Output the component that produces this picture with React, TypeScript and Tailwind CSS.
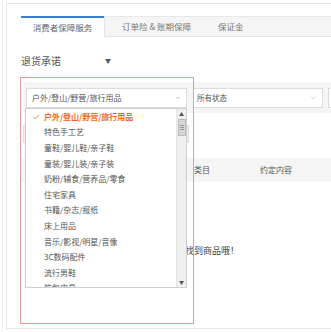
import { ChevronUp, ChevronDown, Check } from 'lucide-react'

const categories = [
  '户外/登山/野营/旅行用品',
  '特色手工艺',
  '童鞋/婴儿鞋/亲子鞋',
  '童装/婴儿装/亲子装',
  '奶粉/辅食/营养品/零食',
  '住宅家具',
  '书籍/杂志/报纸',
  '床上用品',
  '音乐/影视/明星/音像',
  '3C数码配件',
  '流行男鞋',
  '箱包皮具',
]

export default function App() {
  return (
    <div
      className="relative w-[331px] h-[332px] overflow-hidden bg-white text-[#666]"
      style={{ fontFamily: '"Noto Sans CJK SC", "Noto Sans", sans-serif' }}
    >
      <div className="absolute left-[2px] top-0 bottom-0 border-l border-[#eef0f2]" />
      {/* Panel */}
      <div className="ml-[6px] mt-[3px] h-[326px] border-l border-t border-b border-[#e6e9ec] pl-[14px] pt-[12px] overflow-hidden">
        {/* Tabs */}
        <div className="flex h-[21px] bg-[#f5f5f5] border-t border-[#e8e8e8]">
          <div className="w-[83px] -mt-px border-t-2 border-[#3a7fc9] bg-white flex items-center justify-center text-[8.5px] text-[#666]">
            消费者保障服务
          </div>
          <div className="flex-1 flex items-center border-l border-[#e3e3e3] border-b text-[8.5px] text-[#777]">
            <span className="ml-[17px]">订单险 &amp; 账期保障</span>
            <span className="ml-[27px]">保证金</span>
          </div>
        </div>

        {/* Title */}
        <div className="flex items-center h-[20px] mt-[13px]">
          <span className="text-[10px] text-[#555]">退货承诺</span>
          <span className="ml-[44px] text-[6px] text-[#555]">▼</span>
        </div>

        {/* Filter bar */}
        <div className="mt-[12px] ml-[2px] h-[31px] bg-[#f5f5f5] flex items-center pl-[3px] gap-[6px]">
          <div className="w-[161px] shrink-0 h-[20px] bg-white border border-[#dcdcdc] flex items-center justify-between pl-[5px] pr-[4px] text-[8px] text-[#555]">
            <span>户外/登山/野营/旅行用品</span>
            <ChevronUp size={8} strokeWidth={1.5} className="text-[#999]" />
          </div>
          <div className="w-[130px] shrink-0 h-[20px] bg-white border border-[#dcdcdc] flex items-center justify-between pl-[3px] pr-[5px] text-[7.5px] text-[#555]">
            <span>所有状态</span>
            <ChevronDown size={8} strokeWidth={1.5} className="text-[#aaa]" />
          </div>
          <div className="w-[20px] shrink-0 h-[20px] -ml-px bg-white border border-[#dcdcdc]" />
        </div>

        {/* Search button (mostly hidden) */}
        <div className="mt-[12px] ml-[2px] w-[166px] h-[18px] bg-[#eeeeee] border border-[#dddddd]" />

        {/* Table header */}
        <div className="mt-[15px] h-[24px] bg-[#f5f5f5] flex items-center text-[8px] text-[#555]">
          <span className="ml-[173px]">类目</span>
          <span className="ml-[50px]">约定内容</span>
        </div>

        {/* Empty */}
        <div className="mt-[62px] ml-[146px] text-[9px] text-[#444]">没有找到商品哦！</div>
      </div>

      {/* Open dropdown list */}
      <div className="absolute left-[25px] top-[108px] w-[162px] h-[180px] bg-white border border-[#cfcfcf] overflow-hidden flex">
        <div className="flex-1">
          {categories.map((c, i) => (
            <div key={c} className="h-[15.6px] flex items-center">
              <span className="w-[18px] flex justify-center pl-[2px]">
                {i === 0 && <Check size={8} strokeWidth={2.5} className="text-[#f06a1d]" />}
              </span>
              <span
                className={
                  i === 0
                    ? 'text-[8px] text-[#f06a1d] font-bold'
                    : 'text-[8px] text-[#555]'
                }
              >
                {c}
              </span>
            </div>
          ))}
        </div>
        <div className="w-[10px] h-full bg-[#f0f0f0] border-l border-[#e4e4e4] flex flex-col items-center">
          <span className="text-[5px] leading-[10px] text-[#555]">▲</span>
          <div className="w-[8px] h-[17px] bg-[#d6d6d6] border border-[#bbbbbb] flex flex-col justify-center items-center gap-[1px]">
            <span className="w-[4px] h-px bg-[#999]" />
            <span className="w-[4px] h-px bg-[#999]" />
            <span className="w-[4px] h-px bg-[#999]" />
          </div>
          <div className="flex-1" />
          <span className="text-[5px] leading-[10px] text-[#555]">▼</span>
        </div>
      </div>

      {/* Highlight frame */}
      <div className="absolute left-[20px] top-[77px] w-[174px] h-[247px] border border-[#e79a9a] pointer-events-none" />
    </div>
  )
}
